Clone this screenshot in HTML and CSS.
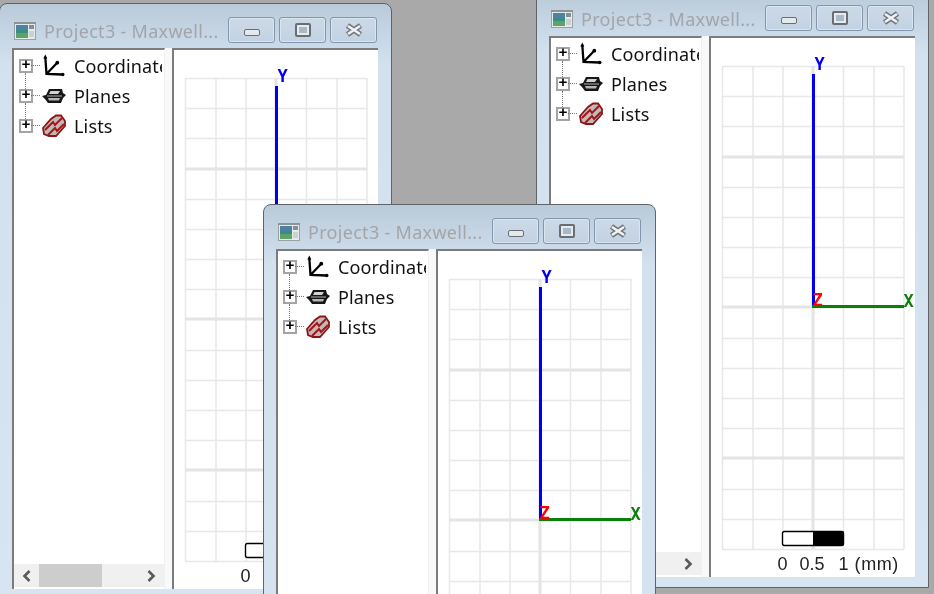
FILE: index.html
```html
<!DOCTYPE html>
<html lang="en">
<head>
    <meta charset="UTF-8">
    <title>Project3 - Maxwell</title>
    <link rel="stylesheet" href="styles.css">
</head>
<body>
    <!-- shared drawings, each window re-uses them -->
    <svg class="defs" width="0" height="0">
        <symbol id="app-icon" viewBox="0 0 22 18">
            <rect x="0.5" y="0.5" width="21" height="17" fill="#e6eaea" stroke="#9aa0a3"/>
            <rect x="0" y="0" width="22" height="2" fill="#8d9498"/>
            <rect x="2" y="3" width="12" height="13" fill="#3a8c80"/>
            <rect x="2" y="3" width="12" height="5" fill="#4d82a2"/>
            <rect x="2" y="11" width="12" height="5" fill="#5fa268"/>
            <rect x="15" y="3" width="5" height="4" fill="#7f9096"/>
            <rect x="15" y="9" width="5" height="6" fill="#c9d2cf"/>
        </symbol>
        <symbol id="close-glyph" viewBox="0 0 18 14">
            <path d="M2.500 2.500 L15.500 11.500 M15.500 2.500 L2.500 11.500" fill="none" stroke="#72767a" stroke-width="5.500"/>
            <path d="M3 3 L15 11 M15 3 L3 11" fill="none" stroke="#f0f2f5" stroke-width="2.600"/>
        </symbol>
        <symbol id="coord-icon" viewBox="0 0 24 24">
            <path d="M3.300 3 L4.500 20 L20 20.500 M4.500 20 L15 9" fill="none" stroke="#000" stroke-width="2.300"/>
            <path d="M3.300 0.500 L1.300 4.500 H5.300 Z"/>
            <circle cx="20.800" cy="20.500" r="1.700"/><circle cx="15.300" cy="8.700" r="1.900"/>
        </symbol>
        <symbol id="plane-icon" viewBox="0 0 24 18">
            <path d="M0 9 L4 8 L7 2 H20 L21 6 L24 8 L21 11 L19 16 H6 L3 12 Z" fill="#161616"/>
            <path d="M8.500 4 H18 L16 7 H7 Z" fill="#d2d2d2"/>
            <path d="M6 11 H18 L17 13.500 H7 Z" fill="#b5b5b5"/>
            <path d="M5 9 H20" stroke="#dcdcdc" stroke-width="0.800"/>
        </symbol>
        <symbol id="list-icon" viewBox="0 0 24 24">
            <path d="M1 14 L9 5 L14 1.500 H19 L23 7 V12 L14 22 H7 L2 20 Z" fill="#c4b7b7" stroke="#8c1515" stroke-width="1.800"/>
            <path d="M3 16 L11 8 L13 11 L20 4 M6 21 L13 14 L15 17 L22 10" fill="none" stroke="#a31616" stroke-width="2"/>
        </symbol>
        <symbol id="chev-left" viewBox="0 0 12 14">
            <path d="M9 2 L4 7 L9 12" fill="none" stroke="#5a5a5a" stroke-width="2.600"/>
        </symbol>
        <symbol id="chev-right" viewBox="0 0 12 14">
            <path d="M3 2 L8 7 L3 12" fill="none" stroke="#5a5a5a" stroke-width="2.600"/>
        </symbol>
        <symbol id="grid" viewBox="0 0 207 541">
            <g class="minor">
                <path d="M13.500 30V513M44 30V513M74 30V513M134.500 30V513M165 30V513M195 30V513"/>
                <path d="M13 30.500H195M13 60.500H195M13 90.500H195M13 151.500H195M13 181.500H195M13 211.500H195M13 241.500H195M13 302.500H195M13 332.500H195M13 362.500H195M13 392.500H195M13 453.500H195M13 483.500H195M13 513.500H195"/>
            </g>
            <g class="major">
                <path d="M104 30V513"/>
                <path d="M13 121H195M13 271H195M13 422H195"/>
            </g>
            <rect x="103" y="38" width="3" height="232" fill="#0000ee"/>
            <rect x="103" y="269" width="92" height="3" fill="#0a800a"/>
            <rect x="73.500" y="495.500" width="61" height="14" rx="2" fill="#fff" stroke="#000" stroke-width="1.400"/>
            <path d="M104 495H133a2 2 0 0 1 2 2V508a2 2 0 0 1-2 2H104Z" fill="#000"/>
        </symbol>
    </svg>

    <div class="desktop">
        <section class="win win-a">
            <header class="titlebar">
                <svg class="app-icon"><use href="#app-icon"/></svg>
                <span class="title">Project3 - Maxwell...</span>
                <div class="win-buttons">
                    <button class="win-btn"><i class="glyph-min"></i></button>
                    <button class="win-btn"><i class="glyph-max"></i></button>
                    <button class="win-btn"><svg class="glyph-close"><use href="#close-glyph"/></svg></button>
                </div>
            </header>
            <div class="panes">
                <div class="tree-pane">
                    <ul class="tree">
                        <li class="row"><span class="box">+</span><svg class="ico"><use href="#coord-icon"/></svg><span class="label">Coordinate</span></li>
                        <li class="row"><span class="box">+</span><svg class="ico"><use href="#plane-icon"/></svg><span class="label">Planes</span></li>
                        <li class="row"><span class="box">+</span><svg class="ico"><use href="#list-icon"/></svg><span class="label">Lists</span></li>
                    </ul>
                    <div class="hscroll">
                        <svg class="arrow"><use href="#chev-left"/></svg>
                        <span class="thumb"></span>
                        <svg class="arrow"><use href="#chev-right"/></svg>
                    </div>
                </div>
                <div class="splitter"></div>
                <div class="view">
                    <svg class="grid"><use href="#grid"/></svg>
                    <span class="axis axis-y">Y</span>
                    <span class="tick tick-0">0</span>
                </div>
            </div>
        </section>

        <section class="win win-b">
            <header class="titlebar">
                <svg class="app-icon"><use href="#app-icon"/></svg>
                <span class="title">Project3 - Maxwell...</span>
                <div class="win-buttons">
                    <button class="win-btn"><i class="glyph-min"></i></button>
                    <button class="win-btn"><i class="glyph-max"></i></button>
                    <button class="win-btn"><svg class="glyph-close"><use href="#close-glyph"/></svg></button>
                </div>
            </header>
            <div class="panes">
                <div class="tree-pane">
                    <ul class="tree">
                        <li class="row"><span class="box">+</span><svg class="ico"><use href="#coord-icon"/></svg><span class="label">Coordinate</span></li>
                        <li class="row"><span class="box">+</span><svg class="ico"><use href="#plane-icon"/></svg><span class="label">Planes</span></li>
                        <li class="row"><span class="box">+</span><svg class="ico"><use href="#list-icon"/></svg><span class="label">Lists</span></li>
                    </ul>
                    <div class="hscroll">
                        <svg class="arrow"><use href="#chev-left"/></svg>
                        <span class="thumb"></span>
                        <svg class="arrow"><use href="#chev-right"/></svg>
                    </div>
                </div>
                <div class="splitter"></div>
                <div class="view">
                    <svg class="grid"><use href="#grid"/></svg>
                    <span class="axis axis-y">Y</span>
                    <span class="axis axis-z">Z</span>
                    <span class="axis axis-x">X</span>
                    <span class="tick tick-0">0</span>
                    <span class="tick tick-half">0.5</span>
                    <span class="tick tick-1">1</span>
                    <span class="tick tick-unit">(mm)</span>
                </div>
            </div>
        </section>

        <section class="win win-c">
            <header class="titlebar">
                <svg class="app-icon"><use href="#app-icon"/></svg>
                <span class="title">Project3 - Maxwell...</span>
                <div class="win-buttons">
                    <button class="win-btn"><i class="glyph-min"></i></button>
                    <button class="win-btn"><i class="glyph-max"></i></button>
                    <button class="win-btn"><svg class="glyph-close"><use href="#close-glyph"/></svg></button>
                </div>
            </header>
            <div class="panes">
                <div class="tree-pane">
                    <ul class="tree">
                        <li class="row"><span class="box">+</span><svg class="ico"><use href="#coord-icon"/></svg><span class="label">Coordinate</span></li>
                        <li class="row"><span class="box">+</span><svg class="ico"><use href="#plane-icon"/></svg><span class="label">Planes</span></li>
                        <li class="row"><span class="box">+</span><svg class="ico"><use href="#list-icon"/></svg><span class="label">Lists</span></li>
                    </ul>
                </div>
                <div class="splitter"></div>
                <div class="view">
                    <svg class="grid"><use href="#grid"/></svg>
                    <span class="axis axis-y">Y</span>
                    <span class="axis axis-z">Z</span>
                    <span class="axis axis-x">X</span>
                </div>
            </div>
        </section>
    </div>
</body>
</html>
```
FILE: styles.css
```css
html, body {
    margin: 0;
    padding: 0;
    overflow: hidden;
}
.defs {
    position: absolute;
}
.desktop {
    position: relative;
    width: 934px;
    height: 594px;
    overflow: hidden;
    background-color: #a9a9a9;
    font-family: "Noto Sans", sans-serif;
    filter: blur(0.45px);
}

/* windows sit on a free desktop */
.win {
    position: absolute;
    box-sizing: border-box;
    width: 393px;
    height: 597px;
    display: flex;
    flex-direction: column;
    border: 1px solid #5f6468;
    border-radius: 8px 8px 0 0;
    background: linear-gradient(#b9cad9, #d3e1ef 60px, #d7e4f2);
}
.win-a { left: -1px; top: 3px; }
.win-b { left: 536px; top: -9px; }
.win-c { left: 263px; top: 204px; }

.titlebar {
    height: 44px;
    box-sizing: border-box;
    flex: none;
    display: flex;
    align-items: center;
    padding: 8px 14px 0 14px;
}
.app-icon {
    width: 22px;
    height: 18px;
    margin-top: 1px;
    flex: none;
}
.title {
    margin: 2px 0 0 8px;
    flex: 1;
    font-size: 18px;
    letter-spacing: 0.3px;
    color: #a3a5a8;
    white-space: nowrap;
}
.win-buttons {
    display: flex;
    gap: 4px;
}
.win-btn {
    width: 47px;
    height: 26px;
    padding: 0;
    display: flex;
    align-items: center;
    justify-content: center;
    border: 1px solid #8296ad;
    border-radius: 3px;
    background: linear-gradient(#ccd9e7, #c3d2e2);
    box-shadow: inset 0 0 0 1px #dbe5f0;
}
.glyph-min {
    width: 16px;
    height: 7px;
    margin-top: 5px;
    box-sizing: border-box;
    border: 1px solid #6a6e72;
    border-radius: 2px;
    background-color: #e6e9ec;
}
.glyph-max {
    width: 16px;
    height: 14px;
    box-sizing: border-box;
    border: 2px solid #6a6e72;
    border-radius: 2px;
    background-color: #a9b8c6;
    box-shadow: inset 0 0 0 2px #e6ebf0;
}
.glyph-close {
    width: 18px;
    height: 14px;
}

.panes {
    flex: 1;
    min-height: 0;
    display: flex;
    padding: 0 13px 10px 12px;
}
.tree-pane {
    width: 153px;
    box-sizing: border-box;
    display: flex;
    flex-direction: column;
    justify-content: space-between;
    overflow: hidden;
    border-left: 2px solid #7c7c7c;
    border-top: 2px solid #7c7c7c;
    border-right: 1px solid #f0f0f0;
    background-color: #fff;
    padding-bottom: 2px;
}
.splitter {
    width: 7px;
    flex: none;
    background-color: #f7f9fb;
}
.view {
    position: relative;
    width: 207px;
    box-sizing: border-box;
    border-left: 2px solid #7c7c7c;
    border-top: 2px solid #7c7c7c;
    background-color: #fff;
    overflow: hidden;
}
.grid {
    position: absolute;
    left: -2px;
    top: -2px;
    width: 207px;
    height: 541px;
}
.minor path {
    fill: none;
    stroke: #e8e8e8;
    stroke-width: 1.5;
}
.major path {
    fill: none;
    stroke: #e4e4e4;
    stroke-width: 3;
}

.tree {
    list-style: none;
    margin: 0 2px 0 0;
    padding: 1px 0 0 5px;
    overflow: hidden;
}
.row {
    height: 30px;
    display: flex;
    align-items: center;
    white-space: nowrap;
}
.box {
    position: relative;
    width: 14px;
    height: 14px;
    box-sizing: border-box;
    flex: none;
    border: 2px solid #a4a4a4;
    background-color: #fff;
    font-family: "Liberation Mono", monospace;
    font-size: 15px;
    font-weight: bold;
    line-height: 10px;
    text-align: center;
    color: #000;
}
.box::after {
    content: "";
    position: absolute;
    left: 10px;
    top: 4px;
    width: 9px;
    border-top: 1px dotted #777;
}
.row:not(:last-child) .box::before {
    content: "";
    position: absolute;
    left: 4px;
    top: 12px;
    height: 16px;
    border-left: 1px dotted #777;
}
.ico {
    width: 24px;
    height: 24px;
    margin-left: 9px;
    flex: none;
}
.label {
    margin-left: 8px;
    font-size: 18px;
    letter-spacing: 0.15px;
    color: #111;
}

.hscroll {
    height: 23px;
    flex: none;
    display: flex;
    align-items: center;
    justify-content: space-between;
    background-color: #f0f0f0;
}
.arrow {
    width: 25px;
    height: 14px;
    flex: none;
}
.thumb {
    width: 63px;
    height: 23px;
    margin-right: 36px;
    background-color: #cdcdcd;
}

/* labels drawn over the viewport */
.axis {
    position: absolute;
    width: 10px;
    font-family: "DejaVu Sans Mono", monospace;
    font-size: 17px;
    font-weight: bold;
    line-height: 15px;
    text-align: center;
}
.axis-y { left: 104px; top: 19px; color: #0000ee; }
.axis-z { left: 102px; top: 255px; color: #ff0000; }
.axis-x { left: 193px; top: 256px; color: #0a800a; }
.tick {
    position: absolute;
    top: 516px;
    font-family: "Liberation Sans", sans-serif;
    font-size: 18px;
    line-height: 20px;
    color: #222;
}
.tick-0 { left: 67px; }
.tick-half { left: 89px; }
.tick-1 { left: 128px; }
.tick-unit { left: 144px; letter-spacing: 0.6px; }
```
